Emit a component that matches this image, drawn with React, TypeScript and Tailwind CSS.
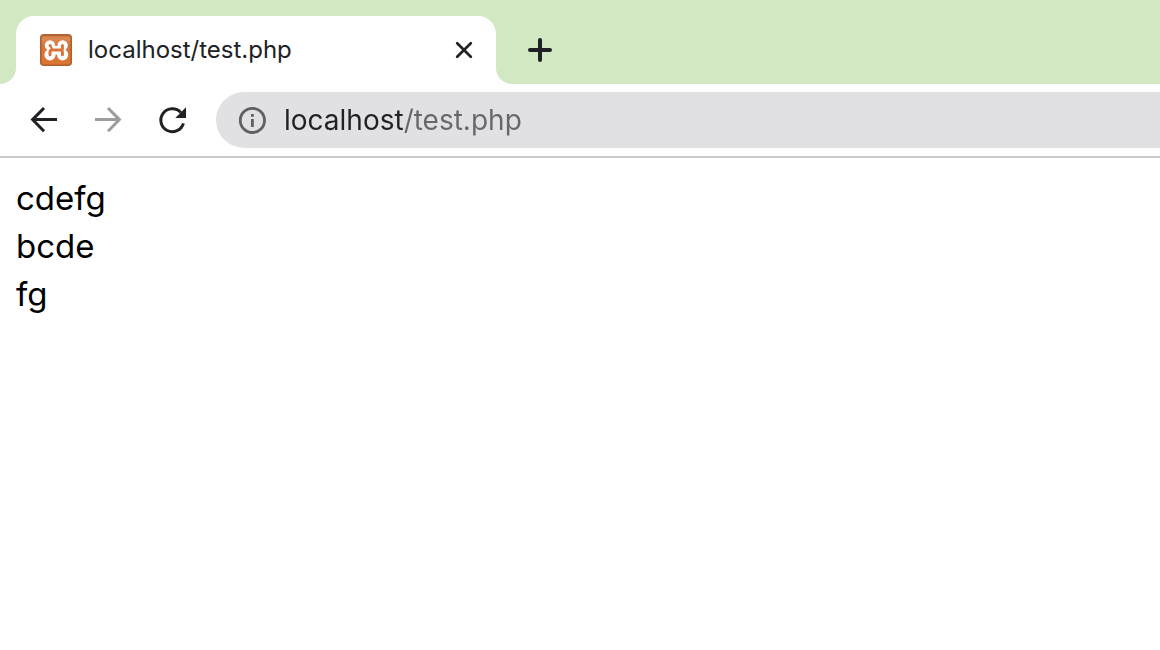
import React from "react";

const lines = ["cdefg", "bcde", "fg"];

function Favicon() {
  return (
    <svg viewBox="0 0 32 32" className="size-8 shrink-0" aria-hidden="true">
      <defs>
        <linearGradient id="tile" x1="0" y1="0" x2="0" y2="1">
          <stop offset="0" stopColor="#b5683a" />
          <stop offset="0.1" stopColor="#d98b55" />
          <stop offset="0.35" stopColor="#d7763a" />
          <stop offset="1" stopColor="#dc7433" />
        </linearGradient>
      </defs>
      <rect x="0.8" y="0.8" width="30.4" height="30.4" rx="3" fill="url(#tile)" stroke="#b0602f" strokeWidth="1.6" />
      <g fill="#fff">
        <circle cx="10" cy="11.4" r="5.2" />
        <circle cx="22.6" cy="11.4" r="5.2" />
        <circle cx="10" cy="20.8" r="5.6" />
        <circle cx="22.6" cy="20.8" r="5.6" />
        <rect x="7" y="12" width="18.6" height="8.6" />
      </g>
      <g fill="none" stroke="#d7763a" strokeLinecap="round" strokeLinejoin="round">
        <path d="M10.1 11.5V11.6M22.4 11.4V14.6Q22.4 16 21 16H12Q10 16 10 18V20.8M21 16Q22.4 16.4 22.4 18V20.8" strokeWidth="3" />
        <path d="M10.2 11.5L12 14.8" strokeWidth="2" />
      </g>
    </svg>
  );
}

export default function App() {
  return (
    <div className="min-h-screen bg-white font-['Inter',sans-serif] text-[#202124]">
      <header>
        <div className="h-4 bg-[#d2e8c2]" />
        <div className="flex h-[68px] bg-white">
          <div className="w-4 rounded-br-2xl bg-[#d2e8c2]" />
          <div className="w-[480px] bg-linear-to-b from-[#d2e8c2] from-50% to-white to-50%">
            <div className="flex h-full items-center rounded-t-[18px] bg-white pr-5 pl-6">
              <Favicon />
              <span className="ml-4 flex-1 text-2xl">localhost/test.php</span>
              <button type="button" aria-label="Close tab" className="size-6">
                <svg viewBox="0 0 24 24" className="size-6" fill="none" stroke="currentColor" strokeWidth="2.7" strokeLinecap="round">
                  <path d="M5.2 5.2L18.8 18.8M18.8 5.2L5.2 18.8" />
                </svg>
              </button>
            </div>
          </div>
          <div className="flex flex-1 items-center rounded-bl-2xl bg-[#d2e8c2] pl-7">
            <button type="button" aria-label="New tab" className="size-8">
              <svg viewBox="0 0 32 32" className="size-8" fill="none" stroke="currentColor" strokeWidth="4" strokeLinecap="round">
                <path d="M16 6V26M6 16H26" />
              </svg>
            </button>
          </div>
        </div>
        <nav aria-label="Browser toolbar" className="flex items-center border-b-2 border-[#cbcbcb] py-2 pl-7">
          <div className="flex gap-8">
            <button type="button" aria-label="Back" className="size-8">
              <svg viewBox="0 0 32 32" className="size-8" fill="none" stroke="currentColor" strokeWidth="3">
                <path d="M29 15.6H5M16 4L4.6 15.6L16 27.2" />
              </svg>
            </button>
            <button type="button" aria-label="Forward" className="size-8 text-[#9d9d9d]" disabled>
              <svg viewBox="0 0 32 32" className="size-8" fill="none" stroke="currentColor" strokeWidth="3">
                <path d="M3 15.6H27M16 4L27.4 15.6L16 27.2" />
              </svg>
            </button>
            <button type="button" aria-label="Reload" className="size-8">
              <svg viewBox="0 0 32 32" className="size-8" fill="none" stroke="currentColor" strokeWidth="3">
                <path d="M27.4 19.3A11.5 11.5 0 1 1 24.8 8.4" />
                <path d="M30 3.3V14H19.3Z" fill="currentColor" stroke="none" />
              </svg>
            </button>
          </div>
          <div className="ml-7 flex h-14 flex-1 items-center rounded-l-full bg-[#e1e1e3] pl-5">
            <button type="button" aria-label="View site information" className="size-8 text-[#5f6063]">
              <svg viewBox="0 0 32 32" className="size-8" fill="none" stroke="currentColor" strokeWidth="2.8">
                <circle cx="16.4" cy="16.4" r="12.1" />
                <path d="M16.4 15V23M16.4 10V12.8" />
              </svg>
            </button>
            <input
              type="text"
              aria-label="Address"
              defaultValue="localhost/test.php"
              spellCheck={false}
              className="ml-4 h-10 min-w-0 flex-1 bg-linear-to-r from-[#202124] from-[119px] to-[#66676a] to-[119px] bg-clip-text text-[28px] text-transparent caret-[#202124] outline-none"
            />
          </div>
        </nav>
      </header>
      <main className="px-4 py-4 text-[33px] leading-[48px] text-black">
        {lines.map((line) => (
          <p key={line}>{line}</p>
        ))}
      </main>
    </div>
  );
}
